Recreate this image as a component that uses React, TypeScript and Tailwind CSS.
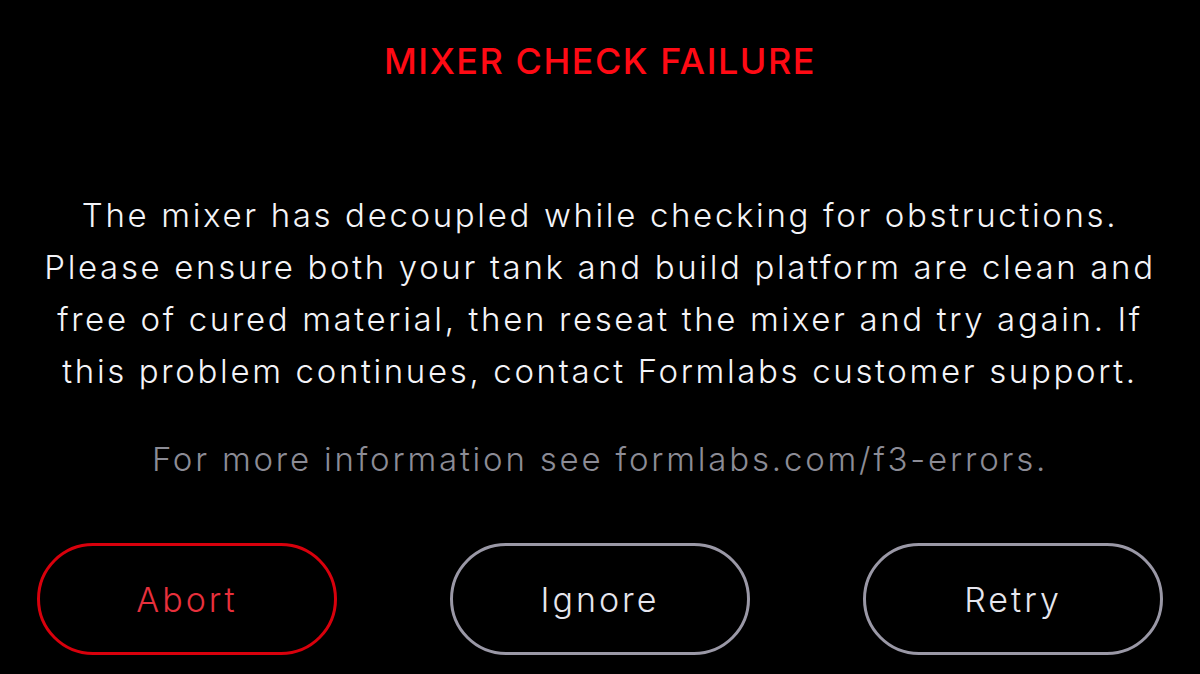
import React from "react";

export default function App() {
  const font = { fontFamily: "Inter, 'Noto Sans', sans-serif" };
  return (
    <div
      className="w-[1200px] h-[674px] bg-black flex flex-col items-center overflow-hidden"
      style={font}
    >
      <h1 className="mt-[40px] h-[42px] leading-[42px] text-[36px] font-medium text-[#ff0a14] tracking-[1.5px]">
        MIXER CHECK FAILURE
      </h1>
      <p className="mt-[107px] text-center text-[33px] font-light leading-[52px] text-[#f4f4f8] tracking-[2.65px] whitespace-nowrap">
        The mixer has decoupled while checking for obstructions.
        <br />
        Please ensure both your tank and build platform are clean and
        <br />
        free of cured material, then reseat the mixer and try again. If
        <br />
        this problem continues, contact Formlabs customer support.
      </p>
      <p className="mt-[36px] text-center text-[33px] font-light leading-[52px] text-[#8c8c96] tracking-[2.8px] whitespace-nowrap">
        For more information see formlabs.com/f3-errors.
      </p>
      <div className="mt-[58px] w-[1126px] flex justify-between">
        <button className="w-[300px] h-[112px] rounded-full border-[3px] border-[#d8000c] text-[#e8303c] text-[34px] font-light tracking-[3px] bg-black">
          Abort
        </button>
        <button className="w-[300px] h-[112px] rounded-full border-[3px] border-[#9a98a6] text-[#e6e6ee] text-[34px] font-light tracking-[3px] bg-black">
          Ignore
        </button>
        <button className="w-[300px] h-[112px] rounded-full border-[3px] border-[#9a98a6] text-[#e6e6ee] text-[34px] font-light tracking-[3px] bg-black">
          Retry
        </button>
      </div>
    </div>
  );
}
